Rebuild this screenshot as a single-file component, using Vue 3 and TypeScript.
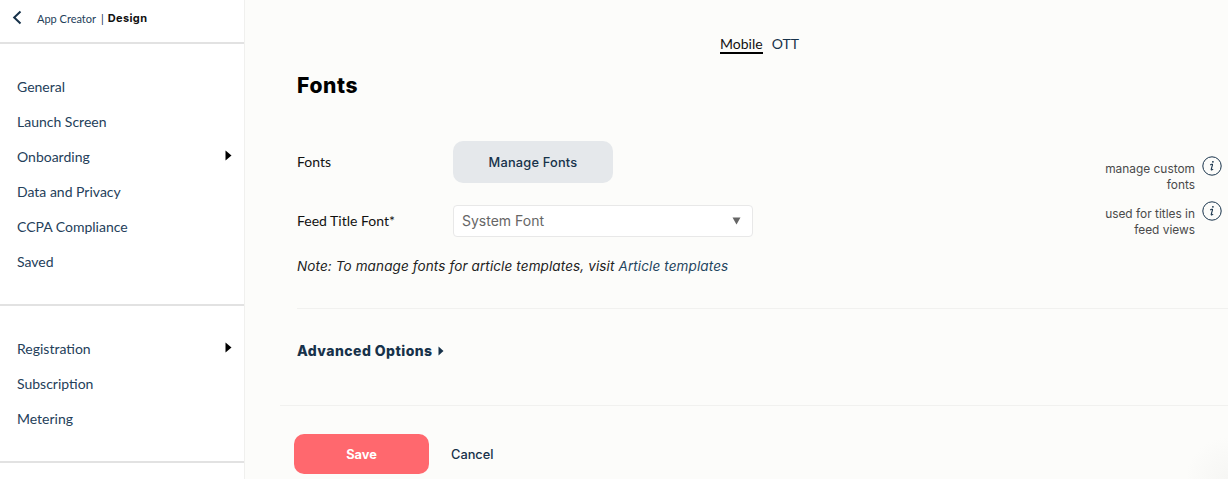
<script setup lang="ts">
const groupA: { label: string; arrow?: boolean }[] = [
  { label: 'General' },
  { label: 'Launch Screen' },
  { label: 'Onboarding', arrow: true },
  { label: 'Data and Privacy' },
  { label: 'CCPA Compliance' },
  { label: 'Saved' },
]
const groupB: { label: string; arrow?: boolean }[] = [
  { label: 'Registration', arrow: true },
  { label: 'Subscription' },
  { label: 'Metering' },
]
</script>

<template>
  <div class="page">
    <aside class="side">
      <header class="crumb">
        <svg class="back" width="10" height="16" viewBox="0 0 10 16"><path d="M8.5 1.5 2.2 7.5l6.3 6" fill="none" stroke="#17324a" stroke-width="2"/></svg>
        <span class="crumb-app">App Creator</span>
        <span class="crumb-sep">|</span>
        <strong class="crumb-cur">Design</strong>
      </header>
      <ul class="group group-a">
        <li v-for="i in groupA" :key="i.label" class="item">
          <span>{{ i.label }}</span>
          <svg v-if="i.arrow" class="tri" width="7" height="11" viewBox="0 0 7 11"><path d="M0.5 0.5 6.5 5.5 0.5 10.5z" fill="#000"/></svg>
        </li>
      </ul>
      <ul class="group group-b">
        <li v-for="i in groupB" :key="i.label" class="item">
          <span>{{ i.label }}</span>
          <svg v-if="i.arrow" class="tri" width="7" height="11" viewBox="0 0 7 11"><path d="M0.5 0.5 6.5 5.5 0.5 10.5z" fill="#000"/></svg>
        </li>
      </ul>
    </aside>

    <main class="main">
      <nav class="tabs">
        <span class="tab active">Mobile</span>
        <span class="tab">OTT</span>
      </nav>
      <div class="section">
        <h1 class="title">Fonts</h1>
        <div class="row row-btn">
          <label class="lbl">Fonts</label>
          <button class="manage">Manage Fonts</button>
          <div class="help help-1">
            <span>manage custom<br />fonts</span>
            <svg class="info" width="20" height="20" viewBox="0 0 20 20"><circle cx="10" cy="10" r="9.2" fill="none" stroke="#17324a" stroke-width="1"/><circle cx="10.9" cy="5.8" r="0.9" fill="#17324a"/><path d="M8.3 9.2c.8-.9 2.2-1.300 2.200-.4l-1.300 4.600c-.2.900 1 .8 1.900-.4" fill="none" stroke="#17324a" stroke-width="1.100"/></svg>
          </div>
        </div>
        <div class="row row-sel">
          <label class="lbl">Feed Title Font*</label>
          <div class="select">
            <span>System Font</span>
            <svg width="9" height="8" viewBox="0 0 9 8"><path d="M0.5 0.500h8L4.500 7.500z" fill="#666"/></svg>
          </div>
          <div class="help help-2">
            <span>used for titles in<br />feed views</span>
            <svg class="info" width="20" height="20" viewBox="0 0 20 20"><circle cx="10" cy="10" r="9.2" fill="none" stroke="#17324a" stroke-width="1"/><circle cx="10.9" cy="5.8" r="0.9" fill="#17324a"/><path d="M8.3 9.2c.8-.9 2.2-1.300 2.200-.4l-1.300 4.600c-.2.900 1 .8 1.900-.4" fill="none" stroke="#17324a" stroke-width="1.100"/></svg>
          </div>
        </div>
        <p class="note">Note: To manage fonts for article templates, visit <a class="link">Article templates</a></p>
      </div>
      <div class="advanced">
        <span>Advanced Options</span>
        <svg width="6" height="10" viewBox="0 0 6 10"><path d="M0.500 0.500 5.500 5 0.500 9.500z" fill="#17324a"/></svg>
      </div>
      <footer class="actions">
        <button class="save">Save</button>
        <span class="cancel">Cancel</span>
      </footer>
    </main>
  </div>
</template>

<style>
html, body { margin: 0; background: #fcfcfa; }
</style>

<style scoped>
.page {
  display: flex;
  width: 1228px;
  height: 479px;
  overflow: hidden;
  background: radial-gradient(circle at 100% 100%, #f6f6f4 0, #fcfcfa 42px);
  color: #17324a;
  font-family: Lato, sans-serif;
}
.side {
  flex: 0 0 245px;
  box-sizing: border-box;
  height: 479px;
  background: #fff;
  border-right: 1px solid #f0f0ee;
}
.crumb {
  display: flex;
  align-items: center;
  box-sizing: border-box;
  height: 44px;
  padding: 0 0 6px 12px;
  border-bottom: 2px solid #e2e2e2;
  font-size: 11px;
}
.back { margin-right: 15px; }
.crumb-app { color: #24405a; }
.crumb-sep { margin: 0 5px 0 5px; }
.crumb-cur { font-family: Inter, sans-serif; font-weight: 700; color: #111; letter-spacing: 0.35px; margin-left: -1px; }
.group {
  list-style: none;
  margin: 0;
  padding: 0 12px 0 17px;
  box-sizing: border-box;
  border-bottom: 2px solid #e2e2e2;
}
.group-a { height: 262px; padding-top: 25px; }
.group-b { height: 157px; padding-top: 25px; }
.item {
  display: flex;
  align-items: center;
  justify-content: space-between;
  height: 35px;
  font-size: 14px;
  color: #24405a;
}
.tri { margin-top: -2px; }
.main {
  flex: 1;
  min-width: 0;
  display: flex;
  flex-direction: column;
}
.tabs {
  display: flex;
  justify-content: center;
  gap: 9px;
  padding-top: 35px;
  margin-left: 46px;
  font-size: 14px;
}
.tab { line-height: 18px; height: 17px; }
.tab.active { color: #111; border-bottom: 2px solid #000; }
.section {
  margin-left: 52px;
  border-bottom: 1px solid #f1f1ef;
  height: 255px;
  box-sizing: border-box;
}
.title {
  margin: 19px 0 0;
  font-family: Inter, sans-serif;
  font-size: 21px;
  line-height: 26px;
  font-weight: 800;
  letter-spacing: 0.6px;
  color: #000;
}
.row { display: flex; position: relative; align-items: center; }
.row-btn { margin-top: 42px; height: 42px; }
.row-sel { margin-top: 22px; height: 32px; }
.lbl { flex: 0 0 156px; font-size: 14px; color: #111; padding-bottom: 2px; }
.manage {
  width: 160px;
  height: 42px;
  border: 0;
  border-radius: 10px;
  background: #e5e8eb;
  color: #17324a;
  font-family: Inter, sans-serif;
  font-size: 12.8px;
  font-weight: 500;
  letter-spacing: 0.2px;
}
.select {
  display: flex;
  align-items: center;
  justify-content: space-between;
  box-sizing: border-box;
  width: 300px;
  height: 32px;
  padding: 0 11px 1px 8px;
  border: 1px solid #e8e8e8;
  border-radius: 4px;
  background: #fff;
  color: #666;
  font-family: Inter, sans-serif;
  font-size: 14px;
}
.help {
  position: absolute;
  right: 6px;
  display: flex;
  align-items: flex-start;
  gap: 7px;
  text-align: right;
  font-family: Inter, sans-serif;
  font-size: 11.9px;
  line-height: 16px;
  color: #4a4a4a;
}
.help span { margin-top: 5px; }
.help-1 { top: 15px; }
.help-2 { top: -4px; }
.info { flex: none; }
.note {
  margin: 19px 0 0;
  font-family: Inter, sans-serif;
  font-style: italic;
  font-size: 13.5px;
  letter-spacing: 0.12px;
  line-height: 20px;
  color: #222;
}
.link { color: #1f4560; }
.advanced {
  display: flex;
  align-items: center;
  gap: 5px;
  margin-left: 52px;
  height: 96px;
  padding-bottom: 13px;
  box-sizing: border-box;
  font-family: Inter, sans-serif;
  font-size: 14px;
  font-weight: 800;
  letter-spacing: 0.45px;
}
.actions {
  position: relative;
  display: flex;
  align-items: center;
  margin-left: 35px;
  padding: 28px 0 0 14px;
  border-top: 1px solid #f1f1ef;
}
.save {
  width: 135px;
  height: 40px;
  border: 0;
  border-radius: 10px;
  background: #ff686e;
  color: #fff;
  font-family: Inter, sans-serif;
  font-size: 12.8px;
  font-weight: 700;
}
.cancel {
  margin-left: 22px;
  font-family: Inter, sans-serif;
  font-size: 12.8px;
  font-weight: 500;
}
</style>
